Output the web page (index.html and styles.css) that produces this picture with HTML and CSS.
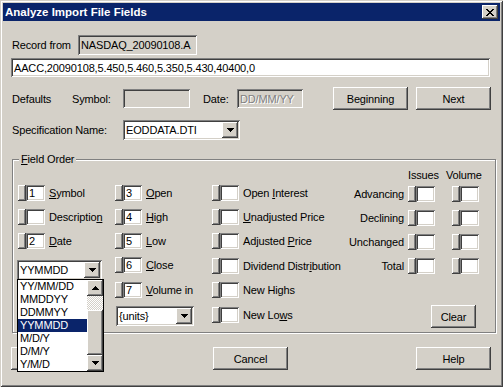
FILE: index.html
```html
<!DOCTYPE html>
<html>
<head>
<meta charset="utf-8">
<title>Analyze Import File Fields</title>
<link rel="stylesheet" href="styles.css">
</head>
<body>
<div class="window">
  <div class="titlebar">
    <span class="title">Analyze Import File Fields</span>
    <span class="close raised"><svg width="8" height="7" viewBox="0 0 8 7" shape-rendering="crispEdges"><path d="M0 0h2v1H0z M6 0h2v1H6z M1 1h2v1H1z M5 1h2v1H5z M2 2h4v1H2z M3 3h2v1H3z M2 4h4v1H2z M1 5h2v1H1z M5 5h2v1H5z M0 6h2v1H0z M6 6h2v1H6z" fill="#000"/></svg></span>
  </div>

  <div class="row r-record">
    <span class="lbl rec-lbl">Record from</span>
    <span class="field sunken ro rec-box">NASDAQ_20090108.A</span>
  </div>

  <div class="row r-line">
    <span class="field sunken edit line-box">AACC,20090108,5.450,5.460,5.350,5.430,40400,0</span>
  </div>

  <div class="row r-defaults">
    <span class="lbl def-lbl">Defaults</span>
    <span class="lbl sym-lbl">Symbol:</span>
    <span class="field sunken ro sym-box"></span>
    <span class="lbl date-lbl">Date:</span>
    <span class="field sunken ro date-box">DD/MM/YY</span>
    <span class="btn raised btn-begin">Beginning</span>
    <span class="btn raised btn-next">Next</span>
  </div>

  <div class="row r-spec">
    <span class="lbl spec-lbl">Specification Name:</span>
    <div class="combo sunken spec-combo">
      <span class="combo-text">EODDATA.DTI</span>
      <span class="combo-btn raised"><svg width="7" height="4" viewBox="0 0 7 4" shape-rendering="crispEdges"><path d="M0 0h7v1H0z M1 1h5v1H1z M2 2h3v1H2z M3 3h1v1H3z" fill="#000"/></svg></span>
    </div>
  </div>

  <div class="group">
    <div class="legend"><u>F</u>ield Order</div>
    <div class="group-body">
      <div class="col col1">
        <div class="fitem"><span class="fb"><span class="fb-btn raised"></span><span class="fb-box sunken">1</span></span><span class="flbl"><u>S</u>ymbol</span></div>
        <div class="fitem"><span class="fb"><span class="fb-btn raised"></span><span class="fb-box sunken"></span></span><span class="flbl">Descriptio<u>n</u></span></div>
        <div class="fitem"><span class="fb"><span class="fb-btn raised"></span><span class="fb-box sunken">2</span></span><span class="flbl"><u>D</u>ate</span></div>
        <div class="combo sunken date-combo">
          <span class="combo-text">YYMMDD</span>
          <span class="combo-btn raised"><svg width="7" height="4" viewBox="0 0 7 4" shape-rendering="crispEdges"><path d="M0 0h7v1H0z M1 1h5v1H1z M2 2h3v1H2z M3 3h1v1H3z" fill="#000"/></svg></span>
        </div>
      </div>

      <div class="col col2">
        <div class="fitem"><span class="fb"><span class="fb-btn raised"></span><span class="fb-box sunken">3</span></span><span class="flbl"><u>O</u>pen</span></div>
        <div class="fitem"><span class="fb"><span class="fb-btn raised"></span><span class="fb-box sunken">4</span></span><span class="flbl"><u>H</u>igh</span></div>
        <div class="fitem"><span class="fb"><span class="fb-btn raised"></span><span class="fb-box sunken">5</span></span><span class="flbl"><u>L</u>ow</span></div>
        <div class="fitem"><span class="fb"><span class="fb-btn raised"></span><span class="fb-box sunken">6</span></span><span class="flbl"><u>C</u>lose</span></div>
        <div class="fitem step"><span class="fb"><span class="fb-btn raised"></span><span class="fb-box sunken">7</span></span><span class="flbl"><u>V</u>olume in</span></div>
        <div class="combo sunken units-combo">
          <span class="combo-text">{units}</span>
          <span class="combo-btn raised"><svg width="7" height="4" viewBox="0 0 7 4" shape-rendering="crispEdges"><path d="M0 0h7v1H0z M1 1h5v1H1z M2 2h3v1H2z M3 3h1v1H3z" fill="#000"/></svg></span>
        </div>
      </div>

      <div class="col col3">
        <div class="fitem"><span class="fb"><span class="fb-btn raised"></span><span class="fb-box sunken"></span></span><span class="flbl">Open <u>I</u>nterest</span></div>
        <div class="fitem"><span class="fb"><span class="fb-btn raised"></span><span class="fb-box sunken"></span></span><span class="flbl"><u>U</u>nadjusted Price</span></div>
        <div class="fitem"><span class="fb"><span class="fb-btn raised"></span><span class="fb-box sunken"></span></span><span class="flbl">Adjusted <u>P</u>rice</span></div>
        <div class="fitem step"><span class="fb"><span class="fb-btn raised"></span><span class="fb-box sunken"></span></span><span class="flbl">Dividend Distr<u>i</u>bution</span></div>
        <div class="fitem"><span class="fb"><span class="fb-btn raised"></span><span class="fb-box sunken"></span></span><span class="flbl">New Highs</span></div>
        <div class="fitem step"><span class="fb"><span class="fb-btn raised"></span><span class="fb-box sunken"></span></span><span class="flbl">New Lo<u>w</u>s</span></div>
      </div>

      <div class="mkt">
        <div class="mkt-grid">
          <span></span><span class="mh">Issues</span><span class="mh mh-vol">Volume</span>
          <span class="ml">Advancing</span>
          <span class="fb"><span class="fb-btn raised"></span><span class="fb-box sunken"></span></span>
          <span class="fb"><span class="fb-btn raised"></span><span class="fb-box sunken"></span></span>
          <span class="ml">Declining</span>
          <span class="fb"><span class="fb-btn raised"></span><span class="fb-box sunken"></span></span>
          <span class="fb"><span class="fb-btn raised"></span><span class="fb-box sunken"></span></span>
          <span class="ml">Unchanged</span>
          <span class="fb"><span class="fb-btn raised"></span><span class="fb-box sunken"></span></span>
          <span class="fb"><span class="fb-btn raised"></span><span class="fb-box sunken"></span></span>
          <span class="ml">Total</span>
          <span class="fb"><span class="fb-btn raised"></span><span class="fb-box sunken"></span></span>
          <span class="fb"><span class="fb-btn raised"></span><span class="fb-box sunken"></span></span>
        </div>
        <span class="btn raised btn-clear">Clear</span>
      </div>
    </div>
  </div>

  <div class="row r-buttons">
    <span class="btn raised btn-ok"></span>
    <span class="btn raised btn-cancel">Cancel</span>
    <span class="btn raised btn-help">Help</span>
  </div>

  <div class="dropdown">
    <div class="dd-items">
      <div class="dd-item">YY/MM/DD</div>
      <div class="dd-item">MMDDYY</div>
      <div class="dd-item">DDMMYY</div>
      <div class="dd-item sel">YYMMDD</div>
      <div class="dd-item">M/D/Y</div>
      <div class="dd-item">D/M/Y</div>
      <div class="dd-item">Y/M/D</div>
    </div>
    <div class="dd-scroll">
      <span class="sb-btn raised"><svg width="7" height="4" viewBox="0 0 7 4" shape-rendering="crispEdges"><path d="M3 0h1v1H3z M2 1h3v1H2z M1 2h5v1H1z M0 3h7v1H0z" fill="#000"/></svg></span>
      <span class="sb-track"></span>
      <span class="sb-thumb raised"></span>
      <span class="sb-btn raised"><svg width="7" height="4" viewBox="0 0 7 4" shape-rendering="crispEdges"><path d="M0 0h7v1H0z M1 1h5v1H1z M2 2h3v1H2z M3 3h1v1H3z" fill="#000"/></svg></span>
    </div>
  </div>
</div>
</body>
</html>
```

FILE: styles.css
```css
* { box-sizing: border-box; }
html, body { margin: 0; padding: 0; }
body {
  background: #d4d0c8;
  font-family: "Liberation Sans", Arial, sans-serif;
  font-size: 11px;
  letter-spacing: -0.15px;
  color: #000;
}
u { text-decoration: underline; text-underline-offset: 1px; }

.window {
  position: relative;
  width: 503px;
  height: 387px;
  padding-top: 3px;
  background: #d4d0c8;
  overflow: hidden;
  box-shadow: inset 1px 1px #d4d0c8, inset -1px -1px #404040, inset 2px 2px #fff, inset -2px -2px #808080;
}

.raised {
  background: #d4d0c8;
  box-shadow: inset -1px -1px #404040, inset 1px 1px #fff, inset -2px -2px #808080, inset 2px 2px #d4d0c8;
}
.sunken {
  box-shadow: inset 1px 1px #808080, inset -1px -1px #fff, inset 2px 2px #404040, inset -2px -2px #d4d0c8;
}

/* title bar */
.titlebar {
  margin: 0 3px;
  height: 18px;
  background: #0a246a;
  display: flex;
  align-items: center;
  justify-content: space-between;
  padding-left: 2px;
}
.title {
  color: #fff;
  font-weight: bold;
  font-size: 11.5px;
  letter-spacing: 0;
  white-space: nowrap;
}
.close {
  width: 16px;
  height: 14px;
  margin-right: 2px;
  display: flex;
  align-items: center;
  justify-content: center;
}
.close svg { display: block; margin-left: -1px; }

/* rows */
.row { display: flex; align-items: center; }
.lbl { white-space: nowrap; }
.field {
  display: flex;
  align-items: center;
  padding: 0 3px;
  white-space: nowrap;
  overflow: hidden;
}
.ro { background: #d4d0c8; }
.edit { background: #fff; }

.r-record { margin-top: 14px; height: 20px; }
.rec-lbl { margin-left: 12px; width: 66px; }
.rec-box { width: 119px; height: 20px; }

.r-line { margin-top: 3px; height: 19px; }
.line-box { margin-left: 11px; width: 479px; height: 19px; }

.r-defaults { margin-top: 10px; height: 23px; }
.def-lbl { margin-left: 12px; width: 60px; }
.sym-lbl { width: 51px; }
.sym-box { width: 67px; height: 19px; }
.date-lbl { margin-left: 13px; width: 34px; }
.date-box { width: 66px; height: 19px; color: #808080; text-shadow: 1px 1px #fff; }

.btn {
  display: flex;
  align-items: center;
  justify-content: center;
  height: 23px;
  white-space: nowrap;
}
.btn-begin { margin-left: 30px; width: 75px; }
.btn-next { margin-left: 8px; width: 75px; }

.r-spec { margin-top: 10px; height: 20px; }
.spec-lbl { margin-left: 12px; width: 111px; }

/* combos */
.combo {
  display: flex;
  align-items: stretch;
  height: 20px;
  padding: 2px;
  background: #fff;
}
.combo-text {
  flex: 1;
  display: flex;
  align-items: center;
  padding-left: 1px;
  white-space: nowrap;
  overflow: hidden;
}
.combo-btn {
  width: 16px;
  display: flex;
  align-items: center;
  justify-content: center;
}
.combo-btn svg { display: block; }
.spec-combo { width: 117px; }

/* group box */
.group {
  margin: 19px 0 0 12px;
  width: 484px;
  height: 174px;
  border: 1px solid #808080;
  box-shadow: 1px 1px #fff, inset 1px 1px #fff;
}
.legend {
  width: fit-content;
  margin: -7px 0 0 6px;
  padding: 0 2px;
  line-height: 13px;
  height: 13px;
  background: #d4d0c8;
}
.group-body {
  display: flex;
  align-items: flex-start;
  margin-top: 19px;
  padding-left: 5px;
}
.col { display: flex; flex-direction: column; gap: 8px; }
.col1 { width: 97px; }
.col2 { width: 97px; }
.col3 { width: 136px; }
.fitem { display: flex; align-items: center; height: 16px; }
.fitem.step { margin-top: 1px; }
.flbl { margin-left: 4px; white-space: nowrap; }

.fb { display: flex; width: 27px; height: 16px; }
.fb-btn { width: 8px; height: 16px; }
.fb-box {
  width: 19px;
  height: 16px;
  background: #fff;
  padding-left: 3px;
  line-height: 16px;
}

.date-combo { margin-top: 3px; margin-left: -1px; width: 85px; }
.units-combo { margin-left: 1px; width: 78px; }

/* market breadth */
.mkt {
  margin-left: auto;
  margin-right: 16px;
  margin-top: -16px;
  display: flex;
  flex-direction: column;
}
.mkt-grid {
  display: grid;
  grid-template-columns: 60px 44px 27px;
  row-gap: 8px;
  align-items: center;
}
.mh { line-height: 13px; height: 13px; white-space: nowrap; margin-bottom: -4px; }
.mh-vol { margin-left: -6px; }
.ml { text-align: right; padding-right: 4px; white-space: nowrap; line-height: 16px; }
.btn-clear {
  align-self: flex-end;
  margin-top: 31px;
  margin-right: 3px;
  width: 45px;
}

/* bottom buttons */
.r-buttons { margin-top: 14px; height: 23px; }
.btn-ok { margin-left: 11px; width: 75px; }
.btn-cancel { margin-left: 127px; width: 75px; }
.btn-help { margin-left: 128px; width: 75px; }

/* dropped-down list (overlay) */
.dropdown {
  position: absolute;
  left: 17px;
  top: 279px;
  width: 87px;
  height: 93px;
  border: 1px solid #000;
  background: #fff;
  display: flex;
}
.dd-items { flex: 1; overflow: hidden; }
.dd-item {
  height: 13px;
  line-height: 13px;
  padding-left: 2px;
  white-space: nowrap;
  overflow: hidden;
}
.dd-item.sel { background: #0a246a; color: #fff; }
.dd-scroll { width: 16px; display: flex; flex-direction: column; }
.sb-btn {
  height: 16px;
  display: flex;
  align-items: center;
  justify-content: center;
}
.sb-btn svg { display: block; }
.sb-track {
  height: 14px;
  background: repeating-conic-gradient(#fff 0 25%, #d4d0c8 0 50%) 0 0 / 2px 2px;
}
.sb-thumb { height: 45px; }
```
